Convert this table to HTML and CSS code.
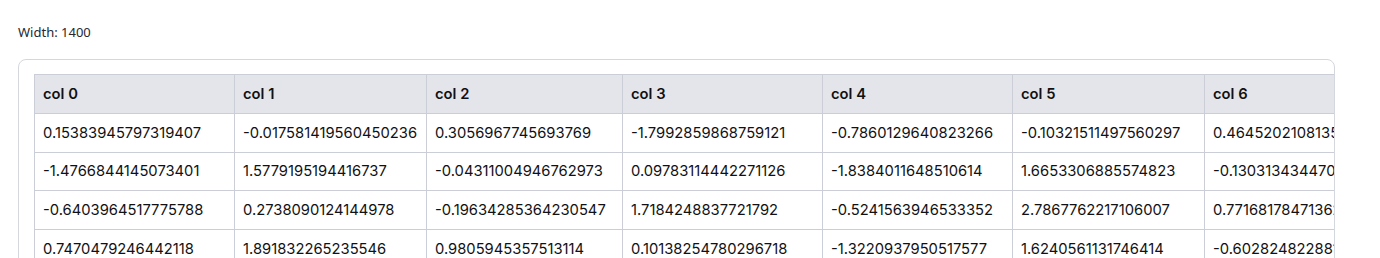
FILE: index.html
```html
<!DOCTYPE html>
<html lang="en">
<head>
<meta charset="utf-8">
<title>Table</title>
<link rel="stylesheet" href="styles.css">
</head>
<body>
<div class="page">
  <p class="caption">Width: 1400</p>
  <div class="card">
    <table class="grid">
      <colgroup>
        <col class="c0"><col class="c1"><col class="c2"><col class="c3"><col class="c4"><col class="c5"><col class="c6">
      </colgroup>
      <thead>
        <tr><th>col 0</th><th>col 1</th><th>col 2</th><th>col 3</th><th>col 4</th><th>col 5</th><th>col 6</th></tr>
      </thead>
      <tbody>
        <tr><td>0.15383945797319407</td><td>-0.017581419560450236</td><td>0.3056967745693769</td><td>-1.7992859868759121</td><td>-0.7860129640823266</td><td>-0.10321511497560297</td><td>0.46452021081359</td></tr>
        <tr><td>-1.4766844145073401</td><td>1.5779195194416737</td><td>-0.04311004946762973</td><td>0.09783114442271126</td><td>-1.8384011648510614</td><td>1.6653306885574823</td><td>-0.13031343447021</td></tr>
        <tr><td>-0.6403964517775788</td><td>0.2738090124144978</td><td>-0.19634285364230547</td><td>1.7184248837721792</td><td>-0.5241563946533352</td><td>2.7867762217106007</td><td>0.77168178471362</td></tr>
        <tr><td>0.7470479246442118</td><td>1.891832265235546</td><td>0.9805945357513114</td><td>0.10138254780296718</td><td>-1.3220937950517577</td><td>1.6240561131746414</td><td>-0.60282482288134</td></tr>
      </tbody>
    </table>
  </div>
</div>
</body>
</html>
```
FILE: styles.css
```css
html, body {
  margin: 0;
  padding: 0;
  background: #ffffff;
}
.page {
  padding: 0 18px;
  width: 1317px;
}
.caption {
  margin: 0;
  padding-top: 23px;
  height: 59px;
  box-sizing: border-box;
  font-family: "Noto Sans", "Open Sans", sans-serif;
  font-size: 13px;
  line-height: 18px;
  color: #262730;
}
.card {
  border: 1px solid #d5d7de;
  border-radius: 8px;
  padding: 14px 0 0 15px;
  overflow: hidden;
  height: 300px;
}
.grid {
  border-collapse: collapse;
  table-layout: fixed;
  width: 1371px;
  font-family: Inter, "Liberation Sans", sans-serif;
  font-size: 14.75px;
  color: #111114;
}
.c0 { width: 200px; }
.c1 { width: 192px; }
.c2 { width: 196px; }
.c3 { width: 200px; }
.c4 { width: 190px; }
.c5 { width: 192px; }
.c6 { width: 200px; }
.grid th, .grid td {
  border: 1px solid #cbced6;
  padding: 0 8px;
  text-align: left;
  white-space: nowrap;
  overflow: hidden;
}
.grid th {
  background: #e4e5ea;
  font-weight: 600;
  height: 38px;
}
.grid td {
  height: 37.67px;
}
```
